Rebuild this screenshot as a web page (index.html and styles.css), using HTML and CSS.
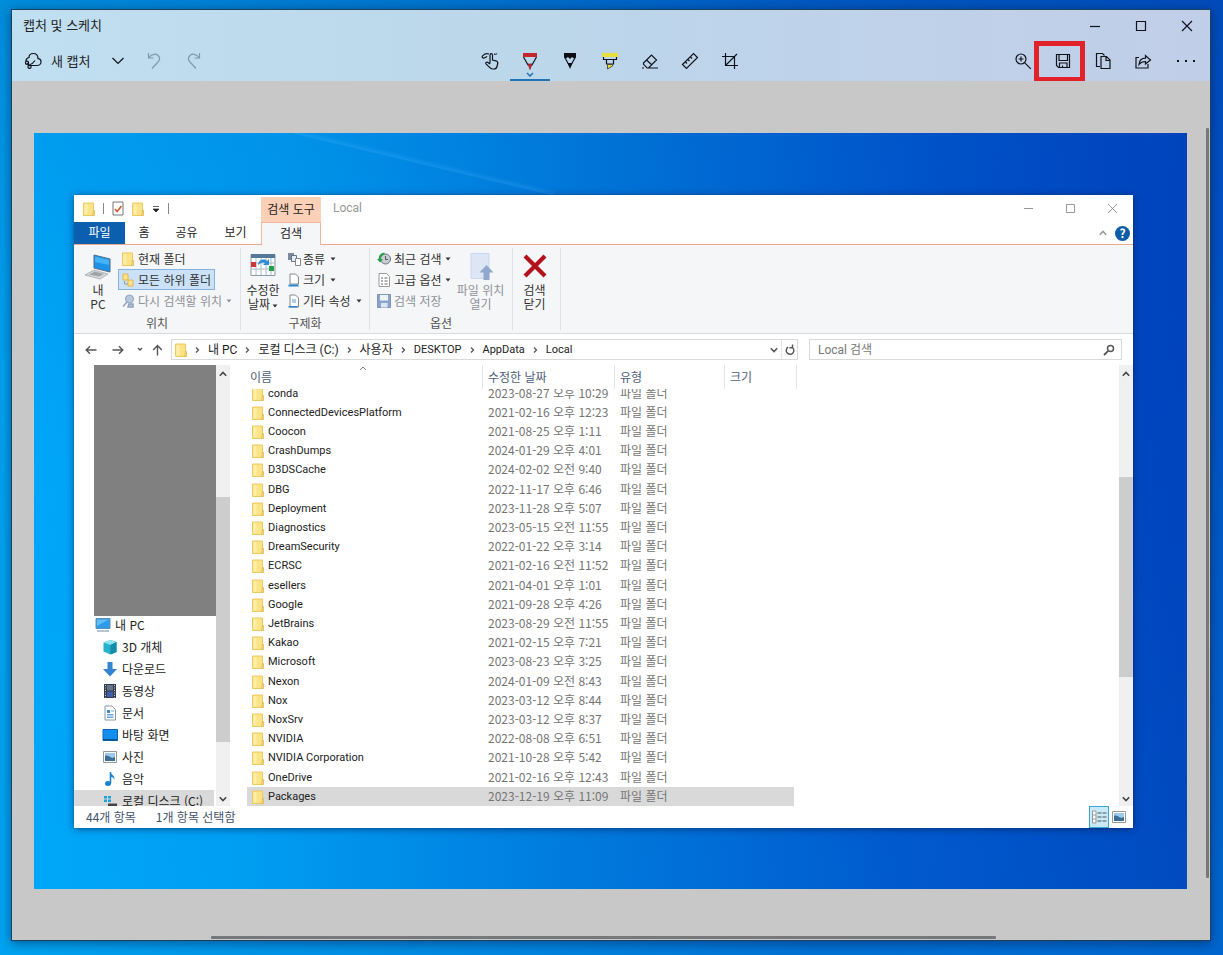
FILE: index.html
```html
<!DOCTYPE html>
<html lang="ko">
<head>
<meta charset="utf-8">
<title>캡처 및 스케치</title>
<link rel="stylesheet" href="styles.css">
</head>
<body>
<svg class="defs" aria-hidden="true">
  <symbol id="folder" viewBox="0 0 12 14"><path d="M.5 1h10v12.500H.5z" fill="#fde388" stroke="#ecca62"/><path d="M1.500 2h3v10.500h-3z" fill="#ffeeaa"/><path d="M9.500 13.500 10.500 8.500h1v5z" fill="#fbdc78" stroke="#dfb94f" stroke-width=".8"/></symbol>
  <symbol id="down" viewBox="0 0 6 4"><path d="M.5.5h5L3 3.500z" fill="currentColor"/></symbol>
  <symbol id="crumb" viewBox="0 0 5 8"><path d="M1 1.500 3.500 4 1 6.500" fill="none" stroke="#555" stroke-width="1.300"/></symbol>
  <symbol id="up-arrow" viewBox="0 0 8 6"><path d="M.8 4.800 4 1.500l3.200 3.300" fill="none" stroke="currentColor" stroke-width="1.600"/></symbol>
  <symbol id="down-arrow" viewBox="0 0 8 6"><path d="M.8 1.200 4 4.500l3.200-3.300" fill="none" stroke="currentColor" stroke-width="1.600"/></symbol>
  <symbol id="picture" viewBox="0 0 14 12"><path d="M.5.5h13v11H.5z" fill="#fff" stroke="#999"/><path d="M2 2h10v4H2z" fill="#9ccbf0"/><path d="M2 5c3-2 5 3 10 1v4H2z" fill="#3b6f96"/></symbol>
</svg>

<main class="app">
  <header class="app-head">
    <div class="titlebar">
      <h1 class="app-title">캡처 및 스케치</h1>
      <div class="caption-buttons">
        <button class="caption" aria-label="최소화"><svg width="12" height="12"><path d="M1 6.500h10" /></svg></button>
        <button class="caption" aria-label="최대화"><svg width="12" height="12"><path d="M1.500 1.500h9v9h-9z"/></svg></button>
        <button class="caption" aria-label="닫기"><svg width="12" height="12"><path d="m1 1 10 10M11 1 1 11"/></svg></button>
      </div>
    </div>
    <div class="toolbar">
      <div class="tools">
        <button class="new-snip"><svg width="18" height="18"><path d="M6 12.500c2-.5 4-2.500 5-4M7 13.500h6c2 0 4-1.300 4-3.500s-1.700-3.300-3-3.300C14 3.500 12 1.500 9.300 1.500 6.500 1.500 5 3.500 5 5.500 3 6 2 7.500 2 9M3 11l3 3"/><circle cx="3" cy="10.800" r="1.600"/><circle cx="5.500" cy="14.700" r="1.600"/></svg>새 캡처</button>
        <button class="tool snip-menu" aria-label="캡처 옵션"><svg width="14" height="8"><path d="m1.500 1 5.500 5.500L12.500 1"/></svg></button>
        <button class="tool muted" aria-label="실행 취소"><svg width="16" height="18"><path d="M2.500 1v5h5M2.500 6C6 1.500 10 1.500 12 3.500s2 4.500 0 6.500l-6 6.500"/></svg></button>
        <button class="tool muted" aria-label="다시 실행"><svg width="16" height="18"><path d="M13.500 1v5h-5M13.500 6C10 1.500 6 1.500 4 3.500s-2 4.500 0 6.500l6 6.500"/></svg></button>
      </div>
      <div class="tools">
        <button class="tool" aria-label="터치 쓰기"><svg width="18" height="18"><path d="M9 11.500V3.200c0-2 2.500-2 2.500 0V8l3.500.8c1.300.3 2 1.200 1.700 2.700l-.7 3c-.4 1.600-1.300 2.500-3 2.500h-1.500c-1.500 0-2.500-1-4-2.600l-2.500-2.600c-.8-1 .6-2.300 1.600-1.500L9 12M8 2C5 1 2.500 2.500 1.500 4c-.7 1.300.3 2.700 1.700 2l3-1.500M13 2.200c1.500.2 2.500 0 3-.7"/></svg></button>
        <button class="tool pen" aria-label="볼펜"><svg width="18" height="18"><path d="M2.500 5 7 13h4l4.500-8"/><path d="M2 1h14v4H2z" fill="#c4252e" stroke="none"/><path d="M7 12h4l-2 5.500z" fill="#c4252e" stroke="#8c1c22" stroke-width=".7"/></svg><svg class="pen-more" width="8" height="5"><path d="m1 1 3 3 3-3"/></svg></button>
        <button class="tool" aria-label="연필"><svg width="18" height="18"><path d="M3.500 5 8 13h2l4.500-8"/><path d="M3 1h12v4l-2 1.500L11 5 9 7 7 5 5 6.500 3 5zM6.500 11h5L9 17z" fill="#0b0c16" stroke="none"/></svg></button>
        <button class="tool" aria-label="형광펜"><svg width="18" height="18"><path d="M2.500 4v3.500H5.500V12h7V7.500h3V4M5.500 7.500h7"/><path d="M1 1h16v4H1z" fill="#e7df3e" stroke="none"/><path d="M6.500 12.500h5V14l-5 3z" fill="#e7df3e" stroke="#333" stroke-width=".8"/></svg></button>
        <button class="tool" aria-label="지우개"><svg width="18" height="18"><path d="m2.500 11 8-8 5 5-8 8H6.200l-3.700-3.700zM5.500 8l5.500 5M7 16h10M1 16h2"/></svg></button>
        <button class="tool" aria-label="눈금자"><svg width="18" height="18"><path d="M1.500 12.500 12.500 1.500l4 4-11 11zM4.500 10l1.500 1.500M7 7.500l1.500 1.500M9.500 5 11 6.500"/></svg></button>
        <button class="tool" aria-label="자르기"><svg width="18" height="18"><path d="M4.500 1v12.500H17M1 4.500h12.500V17M4.500 13.500 16 2"/></svg></button>
      </div>
      <div class="tools tools-end">
        <button class="tool" aria-label="확대/축소"><svg width="18" height="18"><circle cx="7" cy="7" r="5"/><path d="m10.800 10.800 6 6M7 4.500v5M4.500 7h5"/></svg></button>
        <button class="tool save" aria-label="저장"><svg width="18" height="18"><path d="M2.500 2.500h13v13H4.500l-2-2zM5 2.500v6h8.500v-6M5.500 15.500v-4.500h7.500v4.500M8.500 15.500v-2"/></svg><span class="marker"></span></button>
        <button class="tool" aria-label="복사"><svg width="18" height="18"><path d="M6 14.500H2.500v-13h6l2 2M7 4.500h5.500l3.500 3.500v8.500H7zM12 4.500V8.500h4"/></svg></button>
        <button class="tool" aria-label="공유"><svg width="18" height="18"><path d="M5 5.500H2v10.500h12V12M5 12.500c.3-4 3-6.300 6.500-6.300V3.500L16.500 8l-5 4V9.500C8.500 9.500 6.500 10.500 5 12.500z"/></svg></button>
        <button class="tool more" aria-label="자세히 보기"><svg width="20" height="4"><path d="M1 1h2v2H1zM9 1h2v2H9zM17 1h2v2h-2z" fill="#111" stroke="none"/></svg></button>
      </div>
    </div>
  </header>

  <section class="canvas">
    <div class="snip">
      <article class="explorer">
        <div class="ex-title">
          <div class="quick">
            <svg width="12" height="14"><use href="#folder"/></svg><i class="bar"></i>
            <svg width="12" height="15"><path d="M1 1h10v13H1z" fill="#fff" stroke="#777"/><path d="m3 8 2.200 2.500L9.500 5" fill="none" stroke="#d8562f" stroke-width="1.600"/></svg>
            <svg width="12" height="14"><use href="#folder"/></svg>
            <svg width="8" height="8"><path d="M1 1.500h6M1 4h6L4 7z" fill="#222" stroke="#222" stroke-width=".7"/></svg><i class="bar"></i>
          </div>
          <span class="context">검색 도구</span>
          <span class="ex-name">Local</span>
          <div class="ex-caption">
            <button aria-label="창 최소화"><svg width="11" height="11"><path d="M1 5.500h9"/></svg></button>
            <button aria-label="창 최대화"><svg width="11" height="11"><path d="M1.500 1.500h8v8h-8z"/></svg></button>
            <button aria-label="창 닫기"><svg width="11" height="11"><path d="m1 1 9 9M10 1l-9 9"/></svg></button>
          </div>
        </div>
        <nav class="tabs">
          <button class="tab file">파일</button>
          <button class="tab">홈</button>
          <button class="tab">공유</button>
          <button class="tab">보기</button>
          <button class="tab current">검색</button>
          <div class="tabs-end">
            <svg class="fold" width="8" height="6"><use href="#up-arrow"/></svg>
            <button class="help" aria-label="도움말">?</button>
          </div>
        </nav>

        <div class="ribbon">
          <section class="group place">
            <div class="group-body">
              <button class="big pc"><svg width="28" height="28"><path d="M10 2 26 6v13L10 15z" fill="#1c92e8" stroke="#4e6b85"/><path d="m11 3.500 14 3.500v5L11 9z" fill="#44b2f6"/><path d="m1 22 9-5 14 4-8 5z" fill="#d5d8da" stroke="#a4a8ab" stroke-width=".8"/><path d="m5 21.500 6-3 9 2.500-5 2.500z" fill="#9ea4a8"/></svg><span>내<br>PC</span></button>
              <div class="stack">
                <button class="cmd"><svg width="12" height="14"><use href="#folder"/></svg>현재 폴더</button>
                <button class="cmd active"><svg width="12" height="14"><path d="M1 1h5v6H1zM6 7h5v6H6z" fill="#fde388" stroke="#dfb94f"/><path d="M2.500 8v3H6" fill="none" stroke="#999"/></svg>모든 하위 폴더</button>
                <button class="cmd off"><svg width="12" height="14"><circle cx="7.500" cy="5" r="4" fill="#b9c7dc" stroke="#8fa3c2"/><path d="m5 8-4 4.500M7 10h4v3H6z" fill="#b9c7dc" stroke="#8fa3c2" stroke-width="1.500"/></svg>다시 검색할 위치<svg class="caret" width="6" height="4"><use href="#down"/></svg></button>
              </div>
            </div>
            <h2>위치</h2>
          </section>
          <section class="group refine">
            <div class="group-body">
              <button class="big date"><svg width="26" height="24"><path d="M1 1.500h24v21H1z" fill="#fff" stroke="#8d9aa8"/><path d="M1 1h24v4H1z" fill="#54789a"/><path d="M1.500 10h23M1.500 16h23M6 5v17M11 5v17M16 5v17M21 5v17" stroke="#a9b9c8" fill="none"/><path d="M1 9h5v5H1z" fill="#d13438"/><path d="M19 13h5v5h-5z" fill="#22a045"/><path d="M8 12c0-5 6-7 9-4l2-2v6h-6l2-2c-2-1.500-5 0-7 2z" fill="#2f8bd6"/></svg><span>수정한<br>날짜<svg class="caret" width="6" height="4"><use href="#down"/></svg></span></button>
              <div class="stack">
                <button class="cmd"><svg width="15" height="14"><path d="M1 1h6v7H1z" fill="#7d8b99"/><path d="M4.500 3.500h5v6h-5z" fill="#e4eef7" stroke="#5b7590"/><path d="M8.500 6.500h5v7h-5z" fill="#fff" stroke="#888"/></svg>종류<svg class="caret" width="6" height="4"><use href="#down"/></svg></button>
                <button class="cmd"><svg width="15" height="14"><path d="M3 1h5.500l3 3v7H3z" fill="#fff" stroke="#888"/><path d="M1.500 11.500h10v2h-10z" fill="#2b86cf"/></svg>크기<svg class="caret" width="6" height="4"><use href="#down"/></svg></button>
                <button class="cmd"><svg width="15" height="14"><path d="M3 1h5.500l3 3v9H3z" fill="#fff" stroke="#888"/><path d="M5 5h4v4H5z" fill="#a9cdea"/><path d="M1.500 12h9v1.500h-9z" fill="#2b86cf"/></svg>기타 속성<svg class="caret" width="6" height="4"><use href="#down"/></svg></button>
              </div>
            </div>
            <h2>구제화</h2>
          </section>
          <section class="group options">
            <div class="group-body">
              <div class="stack">
                <button class="cmd"><svg width="14" height="14"><circle cx="8.500" cy="7" r="5" fill="#c9ced2" stroke="#6d7478"/><path d="M8.500 4v3.500H11" fill="none" stroke="#555"/><path d="M0 7h6L3 10.500z" fill="#24a148"/><path d="M2.500 7c0-3 2-5 5-5.500" fill="none" stroke="#24a148" stroke-width="2"/></svg>최근 검색<svg class="caret" width="6" height="4"><use href="#down"/></svg></button>
                <button class="cmd"><svg width="14" height="14"><path d="M2 .5h7.500L12.500 3.500v10H2z" fill="#fff" stroke="#999"/><path d="M4 5h2M7.500 5h3M4 8h2M7.500 8h3M4 11h2M7.500 11h3" stroke="#666"/></svg>고급 옵션<svg class="caret" width="6" height="4"><use href="#down"/></svg></button>
                <button class="cmd off"><svg width="14" height="14"><path d="M.5.5h13v13H.5z" fill="#8ba5c9" stroke="#7c96ba"/><path d="M3 1h8v5.500H3z" fill="#eef3fa"/><path d="M4 9h6.500v4.500H4z" fill="#dce6f2"/></svg>검색 저장</button>
              </div>
              <button class="big location off"><svg width="26" height="28"><path d="M3 .5h18v25H3z" fill="#dce6f5" stroke="#cbd7ea"/><path d="m18.500 12 7 7.500h-4V27h-6v-7.500h-4z" fill="#91a7ce"/></svg><span>파일 위치<br>열기</span></button>
            </div>
            <h2>옵션</h2>
          </section>
          <section class="group close">
            <div class="group-body">
              <button class="big"><svg width="24" height="26"><path d="m2 3 20 20M22 3 2 23" stroke="#b3121d" stroke-width="4.200"/></svg><span>검색<br>닫기</span></button>
            </div>
          </section>
        </div>

        <div class="address">
          <button class="nav" aria-label="뒤로"><svg width="12" height="10"><path d="M11.500 5H1.500M5 1.200 1.200 5 5 8.800"/></svg></button>
          <button class="nav" aria-label="앞으로"><svg width="12" height="10"><path d="M.5 5h10M7 1.200 10.800 5 7 8.800"/></svg></button>
          <button class="nav recent" aria-label="최근 위치"><svg width="6" height="5"><path d="m1 1 2 2 2-2"/></svg></button>
          <button class="nav parent" aria-label="위로"><svg width="11" height="12"><path d="M5.500 11.500V1.500M1.200 6l4.300-4.500L9.800 6"/></svg></button>
          <div class="path">
            <svg width="12" height="14"><use href="#folder"/></svg>
            <svg class="sep" width="5" height="8"><use href="#crumb"/></svg><a href="#">내 PC</a>
            <svg class="sep" width="5" height="8"><use href="#crumb"/></svg><a href="#">로컬 디스크 (C:)</a>
            <svg class="sep" width="5" height="8"><use href="#crumb"/></svg><a href="#">사용자</a>
            <svg class="sep" width="5" height="8"><use href="#crumb"/></svg><a class="latin" href="#">DESKTOP</a>
            <svg class="sep" width="5" height="8"><use href="#crumb"/></svg><a class="latin" href="#">AppData</a>
            <svg class="sep" width="5" height="8"><use href="#crumb"/></svg><a class="latin" href="#">Local</a>
            <button class="history" aria-label="이전 위치"><svg width="8" height="6"><use href="#down-arrow"/></svg></button>
            <button class="refresh" aria-label="새로 고침"><svg width="10" height="11"><path d="M3 3.200a3.800 3.800 0 1 0 4.500.3M7.500.5v3.300H4.500" fill="none" stroke="#555" stroke-width="1.400"/></svg></button>
          </div>
          <label class="search"><input type="search" placeholder="Local 검색" aria-label="Local 검색"><svg width="12" height="12"><circle cx="7.500" cy="4.500" r="3" fill="none" stroke="#555" stroke-width="1.500"/><path d="M5.200 6.800 1 11" stroke="#555" stroke-width="1.800"/></svg></label>
        </div>

        <div class="panes">
          <aside class="side">
            <div class="blank"></div>
            <ul class="tree">
              <li class="root"><svg width="16" height="14"><path d="M1 .5h14v10H1z" fill="#2c9be8" stroke="#5f91b8"/><path d="M2 1.500h12L2 8z" fill="#62bdf4"/><path d="M2 13h12" stroke="#6f8da6"/></svg>내 PC</li>
              <li><svg width="16" height="16"><path d="m1.500 3.500 7-2.500 6 2v10l-6 2.500-7-3z" fill="#27b0ca"/><path d="m1.500 3.500 7 2.500 6-3-6-2z" fill="#8be6ee"/><path d="M8.500 6v9.500l6-2.500V3z" fill="#128ba9"/></svg>3D 개체</li>
              <li><svg width="16" height="16"><path d="M5.500 1h5v7H15l-7 7.500L1 8h4.500z" fill="#3184d2"/></svg>다운로드</li>
              <li><svg width="16" height="16"><path d="M2 1h12v14H2z" fill="#333b46"/><path d="M5 2h6v5.500H5z" fill="#66758c"/><path d="M5 8.500h6V14H5z" fill="#405db0"/><path d="M3.500 2v13M12.500 2v13" stroke="#ddd" stroke-dasharray="1 1.500"/></svg>동영상</li>
              <li><svg width="16" height="16"><path d="M3 1h7l3.500 3.500V15H3z" fill="#fff" stroke="#8a9aa8"/><path d="M5 5h3v3H5z" fill="#398dcc"/><path d="M9 6h3M5 9.500h6.500M5 11h6.500M5 12.500h6.500" stroke="#68a9da"/></svg>문서</li>
              <li><svg width="16" height="16"><path d="M1 2.500h14.500v11H1z" fill="#148eee" stroke="#0869b5"/><path d="M1 12h14.500v1.500H1z" fill="#075692"/></svg>바탕 화면</li>
              <li><svg width="16" height="12"><use href="#picture"/></svg>사진</li>
              <li><svg width="16" height="16"><path d="M8.500 1v11" stroke="#1683cf" stroke-width="1.600"/><path d="M8 1c1 3 5 3 4.500 8-1-3-3-3-4.500-3.500z" fill="#1683cf"/><ellipse cx="6" cy="12.500" rx="3" ry="2.500" fill="#1683cf"/></svg>음악</li>
              <li class="picked"><svg width="16" height="16"><path d="M2 3h3v2.500H2zM6 3h3v2.500H6zM2 6.500h3V9H2zM6 6.500h3V9H6z" fill="#1ba1dd"/><path d="M6 10.500h9v4H6z" fill="#444"/></svg>로컬 디스크 (C:)</li>
            </ul>
          </aside>
          <div class="scroll side-scroll"><svg width="8" height="6"><use href="#up-arrow"/></svg><i class="thumb"></i><svg width="8" height="6"><use href="#down-arrow"/></svg></div>

          <table class="files">
            <thead><tr><th><svg class="sorted" width="8" height="5"><path d="m1 4 3-3 3 3" fill="none" stroke="#777"/></svg>이름</th><th>수정한 날짜</th><th>유형</th><th>크기</th></tr></thead>
            <tbody>
              <tr><td><svg width="12" height="14"><use href="#folder"/></svg>conda</td><td>2023-08-27 오후 10:29</td><td>파일 폴더</td><td></td></tr>
              <tr><td><svg width="12" height="14"><use href="#folder"/></svg>ConnectedDevicesPlatform</td><td>2021-02-16 오후 12:23</td><td>파일 폴더</td><td></td></tr>
              <tr><td><svg width="12" height="14"><use href="#folder"/></svg>Coocon</td><td>2021-08-25 오후 1:11</td><td>파일 폴더</td><td></td></tr>
              <tr><td><svg width="12" height="14"><use href="#folder"/></svg>CrashDumps</td><td>2024-01-29 오후 4:01</td><td>파일 폴더</td><td></td></tr>
              <tr><td><svg width="12" height="14"><use href="#folder"/></svg>D3DSCache</td><td>2024-02-02 오전 9:40</td><td>파일 폴더</td><td></td></tr>
              <tr><td><svg width="12" height="14"><use href="#folder"/></svg>DBG</td><td>2022-11-17 오후 6:46</td><td>파일 폴더</td><td></td></tr>
              <tr><td><svg width="12" height="14"><use href="#folder"/></svg>Deployment</td><td>2023-11-28 오후 5:07</td><td>파일 폴더</td><td></td></tr>
              <tr><td><svg width="12" height="14"><use href="#folder"/></svg>Diagnostics</td><td>2023-05-15 오전 11:55</td><td>파일 폴더</td><td></td></tr>
              <tr><td><svg width="12" height="14"><use href="#folder"/></svg>DreamSecurity</td><td>2022-01-22 오후 3:14</td><td>파일 폴더</td><td></td></tr>
              <tr><td><svg width="12" height="14"><use href="#folder"/></svg>ECRSC</td><td>2021-02-16 오전 11:52</td><td>파일 폴더</td><td></td></tr>
              <tr><td><svg width="12" height="14"><use href="#folder"/></svg>esellers</td><td>2021-04-01 오후 1:01</td><td>파일 폴더</td><td></td></tr>
              <tr><td><svg width="12" height="14"><use href="#folder"/></svg>Google</td><td>2021-09-28 오후 4:26</td><td>파일 폴더</td><td></td></tr>
              <tr><td><svg width="12" height="14"><use href="#folder"/></svg>JetBrains</td><td>2023-08-29 오전 11:55</td><td>파일 폴더</td><td></td></tr>
              <tr><td><svg width="12" height="14"><use href="#folder"/></svg>Kakao</td><td>2021-02-15 오후 7:21</td><td>파일 폴더</td><td></td></tr>
              <tr><td><svg width="12" height="14"><use href="#folder"/></svg>Microsoft</td><td>2023-08-23 오후 3:25</td><td>파일 폴더</td><td></td></tr>
              <tr><td><svg width="12" height="14"><use href="#folder"/></svg>Nexon</td><td>2024-01-09 오전 8:43</td><td>파일 폴더</td><td></td></tr>
              <tr><td><svg width="12" height="14"><use href="#folder"/></svg>Nox</td><td>2023-03-12 오후 8:44</td><td>파일 폴더</td><td></td></tr>
              <tr><td><svg width="12" height="14"><use href="#folder"/></svg>NoxSrv</td><td>2023-03-12 오후 8:37</td><td>파일 폴더</td><td></td></tr>
              <tr><td><svg width="12" height="14"><use href="#folder"/></svg>NVIDIA</td><td>2022-08-08 오후 6:51</td><td>파일 폴더</td><td></td></tr>
              <tr><td><svg width="12" height="14"><use href="#folder"/></svg>NVIDIA Corporation</td><td>2021-10-28 오후 5:42</td><td>파일 폴더</td><td></td></tr>
              <tr><td><svg width="12" height="14"><use href="#folder"/></svg>OneDrive</td><td>2021-02-16 오후 12:43</td><td>파일 폴더</td><td></td></tr>
              <tr class="picked"><td><svg width="12" height="14"><use href="#folder"/></svg>Packages</td><td>2023-12-19 오후 11:09</td><td>파일 폴더</td><td></td></tr>
            </tbody>
          </table>
          <div class="scroll list-scroll"><svg width="8" height="6"><use href="#up-arrow"/></svg><i class="thumb"></i><svg width="8" height="6"><use href="#down-arrow"/></svg></div>
        </div>

        <footer class="status">
          <span>44개 항목</span><span>1개 항목 선택함</span>
          <div class="views">
            <button class="view on" aria-label="자세히"><svg width="16" height="14"><path d="M1.500 1h3.500v12H1.500zM1.500 5H5M1.500 9H5" fill="#fff" stroke="#999"/><path d="M6.500 3h4M11.500 3h4M6.500 7h4M11.500 7h4M6.500 11h4M11.500 11h4" stroke="#555"/></svg></button>
            <button class="view" aria-label="큰 아이콘"><svg width="14" height="12"><use href="#picture"/></svg></button>
          </div>
        </footer>
      </article>
    </div>
    <i class="pan pan-y"></i>
    <i class="pan pan-x"></i>
  </section>
</main>
</body>
</html>
```
FILE: styles.css
```css
* { box-sizing: border-box; }

body {
  margin: 0;
  min-height: 100vh;
  display: flex;
  padding: 9px 12px 14px 11px;
  font: 12px/14px "Noto Sans CJK KR", sans-serif;
  color: #222;
  background: linear-gradient(175deg, rgba(0, 20, 80, .12), transparent 30%, rgba(0, 190, 250, .2)), linear-gradient(90deg, #009eee, #0080dc 35%, #0060cc 65%, #0050c4);
}

button {
  margin: 0;
  padding: 0;
  border: 0;
  background: none;
  color: inherit;
  font: inherit;
}

svg { flex: none; display: block; }
.defs { position: absolute; width: 0; height: 0; }

/* Application window */
.app {
  flex: 1;
  display: flex;
  flex-direction: column;
  border: 1px solid #19425f;
  box-shadow: 0 2px 10px rgba(0, 20, 60, .5);
}

.app-head {
  background: linear-gradient(90deg, #c0dff0, #bcd6ea 45%, #c1cee8);
  font-size: 13px;
}

.app-head svg {
  fill: none;
  stroke: #10131c;
  stroke-width: 1.2;
}

.titlebar {
  display: flex;
  justify-content: space-between;
  align-items: center;
  height: 31px;
  padding-left: 11px;
}

.app-title { margin: 0; padding-bottom: 2px; font-size: 13px; font-weight: 400; }
.caption-buttons { display: flex; }
.caption { width: 46px; height: 31px; display: grid; place-items: center; }

.toolbar {
  display: grid;
  grid-template-columns: 1fr auto 1fr;
  height: 40px;
  padding-right: 2px;
}

.tools { display: flex; }
.tools-end { justify-content: flex-end; }
.tool { position: relative; width: 40px; display: grid; place-items: center; }
.tool.muted svg { stroke: #7e99ab; }
.tool.snip-menu { width: 32px; }
.tool.more { width: 45px; }

.new-snip {
  display: flex;
  align-items: center;
  gap: 9px;
  padding: 0 11px 0 12px;
}

.tool.pen { border-bottom: 2px solid #1f73b7; padding-top: 2px; }
.app-head .pen-more { position: absolute; bottom: 2px; left: 16px; stroke: #1f73b7; stroke-width: 1.5; }

.marker {
  position: absolute;
  inset: 0 -2px -1px -9px;
  border: 5px solid #e1222b;
}

.canvas {
  flex: 1;
  position: relative;
  display: flex;
  padding: 52px 23px 51px 22px;
  background: #c8c8c8;
}

.pan { position: absolute; background: #77787a; border-radius: 1px; }
.pan-y { top: 47px; right: 1px; bottom: 62px; width: 3px; }
.pan-x { left: 16.6%; right: 17.9%; bottom: 1px; height: 3px; }

.snip {
  flex: 1;
  display: flex;
  padding: 62px 54px 61px 40px;
  background:
    linear-gradient(to top right, transparent 49%, rgba(120, 200, 255, .16) 50%, transparent 54%) 260px 0 / 260px 62px no-repeat,
    linear-gradient(172deg, rgba(0, 60, 150, .1), transparent 40%, rgba(0, 200, 255, .08)),
    linear-gradient(94deg, #00a8fa, #009bf2 22%, #0074da 50%, #0052ca 76%, #0040ba);
}

/* File explorer */
.explorer {
  flex: 1;
  min-width: 0;
  display: flex;
  flex-direction: column;
  background: #fff;
  box-shadow: 0 1px 7px rgba(0, 20, 70, .6);
}

.ex-title { display: flex; height: 27px; }
.quick { display: flex; align-items: center; gap: 8px; width: 187px; padding-left: 9px; }
.bar { width: 1px; height: 11px; background: #888; }

.context {
  width: 60px;
  margin-top: 2px;
  padding-top: 5px;
  text-align: center;
  background: #fcd0b7;
}

.ex-name { padding: 6px 12px; color: #999; font-family: Roboto, sans-serif; }
.ex-caption { display: flex; margin-left: auto; }
.ex-caption button { width: 42px; display: grid; place-items: center; }
.ex-caption svg { fill: none; stroke: #999; }

.tabs {
  display: flex;
  height: 23px;
  border-bottom: 1px solid #eda98c;
}

.tab { width: 45px; padding-bottom: 2px; }
.tab:nth-child(2) { width: 38px; }
.tab:nth-child(3) { width: 47px; }
.tab:nth-child(4) { width: 51px; }
.tab.file { width: 51px; background: #0b5fae; color: #fff; }

.tab.current {
  width: 60px;
  height: 23px;
  border: 1px solid #f0b79f;
  border-bottom: 0;
  background: #f5f6f7;
}

.tabs-end { display: flex; align-items: center; gap: 8px; margin-left: auto; padding-right: 3px; }
.fold { color: #999; }

.help {
  width: 15px;
  height: 15px;
  border-radius: 50%;
  background: #0d5ca8;
  color: #fff;
  font-weight: 700;
}

.ribbon {
  display: flex;
  height: 89px;
  padding: 3px 0;
  border-bottom: 1px solid #d9dbdd;
  background: #f5f6f7;
  color: #333;
}

.group {
  display: flex;
  flex-direction: column;
  justify-content: space-between;
  border-right: 1px solid #e0e2e4;
}

.group h2 {
  margin: 0;
  color: #555;
  font-size: 12px;
  font-weight: 400;
  text-align: center;
}

.group-body { display: flex; }
.place { width: 167px; }
.refine { width: 129px; }
.options { width: 143px; }
.close { width: 48px; }
.close .group-body { justify-content: center; padding-right: 4px; }

.big {
  display: flex;
  flex-direction: column;
  align-items: center;
  gap: 2px;
  padding-top: 5px;
  white-space: nowrap;
}

.big svg:first-child { height: 28px; }
.pc { width: 44px; padding-left: 4px; }
.date { width: 44px; }
.date .caret { display: inline-block; vertical-align: middle; margin-left: 2px; }
.location { width: 54px; }

.stack { display: flex; flex-direction: column; }

.cmd {
  display: flex;
  align-items: center;
  align-self: flex-start;
  gap: 4px;
  height: 21px;
  padding: 0 3px;
  border: 1px solid transparent;
  white-space: nowrap;
}

.cmd.active { border-color: #86b2de; background: #cbe1f7; }
.off { color: #8e9299; }
.options .cmd { padding: 0 2px 0 6px; gap: 3px; }
.refine .cmd { padding: 0 1px; gap: 1px; }
.refine .cmd .caret { margin-left: 4px; }

.address {
  display: flex;
  align-items: center;
  height: 31px;
  padding: 0 11px 0 9px;
}

.nav { width: 27px; padding-left: 2px; }
.nav.recent { width: 15px; padding-left: 0; }
.nav.parent { width: 19px; padding-left: 0; }
.nav svg { fill: none; stroke: #555; stroke-width: 1.4; }

.path, .search {
  display: flex;
  align-items: center;
  height: 21px;
  border: 1px solid #d9d9d9;
}

.path { flex: 622; padding-left: 3px; font-family: Roboto, "Noto Sans CJK KR", sans-serif; }
.path a { color: inherit; text-decoration: none; white-space: nowrap; }
.path .latin { font-size: 11px; }
.path .sep { margin: 0 8px; }

.history { margin-left: auto; padding: 0 3px; color: #555; }

.refresh {
  align-self: stretch;
  display: grid;
  place-items: center;
  width: 16px;
  border-left: 1px solid #e4e4e4;
}

.search { flex: 297; margin-left: 11px; padding: 0 6px 0 8px; }

.search input {
  flex: 1;
  min-width: 0;
  padding: 0;
  border: 0;
  outline: 0;
  background: none;
  font: 12px/14px Roboto, "Noto Sans CJK KR", sans-serif;
}

.search input::placeholder { color: #777; }

.panes { flex: 1; display: flex; min-height: 0; }

.side { width: 142px; display: flex; flex-direction: column; }
.blank { height: 251px; margin-left: 20px; background: #808080; }

.tree {
  margin: 0;
  padding: 0 2px 0 0;
  height: 190px;
  overflow: hidden;
  list-style: none;
}

.tree li { display: flex; align-items: center; gap: 4px; height: 22px; padding-left: 28px; white-space: nowrap; }
.tree .root { height: 20px; padding: 0 0 2px 21px; }
.picked { background: #d9d9d9; }

.scroll {
  display: flex;
  flex-direction: column;
  align-items: center;
  width: 14px;
  padding: 6px 0 4px;
  background: #f0f0f0;
  color: #444;
}

.thumb { width: 14px; background: #cdcdcd; }
.side-scroll .thumb { height: 245px; margin: 120px 0 auto; }
.list-scroll .thumb { height: 200px; margin: 100px 0 auto; }

.files {
  flex: 1;
  display: flex;
  flex-direction: column;
  margin-left: 17px;
  border-spacing: 0;
}

.files tr { display: grid; grid-template-columns: 236px 132px 110px 72px 1fr; }
.files thead { flex: none; display: block; }
.files thead tr { height: 24px; }

.files th {
  position: relative;
  padding: 5px 5px 0;
  border-right: 1px solid #e5e5e5;
  color: #4c607a;
  font-weight: 400;
  text-align: left;
}

.files th:first-child { padding-left: 3px; }
.sorted { position: absolute; top: 1px; left: 112px; }

.files tbody {
  height: 417px;
  display: flex;
  flex-direction: column;
  justify-content: flex-end;
  overflow: hidden;
}

.files tbody tr { flex: none; align-items: center; height: 19px; width: 547px; }
.files tbody tr:nth-child(5n) { height: 20px; }
.files td { padding: 0 5px 2px; color: #757575; white-space: nowrap; }

.files td:first-child {
  display: flex;
  align-items: center;
  gap: 4px;
  padding: 0 5px;
  color: #222;
  font-family: Roboto, sans-serif;
  font-size: 11px;
}

.status {
  display: flex;
  align-items: center;
  gap: 20px;
  height: 22px;
  padding-left: 12px;
  color: #3f536e;
}

.views { display: flex; align-self: stretch; margin-left: auto; padding-right: 4px; }
.view { width: 20px; display: grid; place-items: center; }
.view.on { border: 1px solid #38a7d3; background: #c8eaf7; }
```
